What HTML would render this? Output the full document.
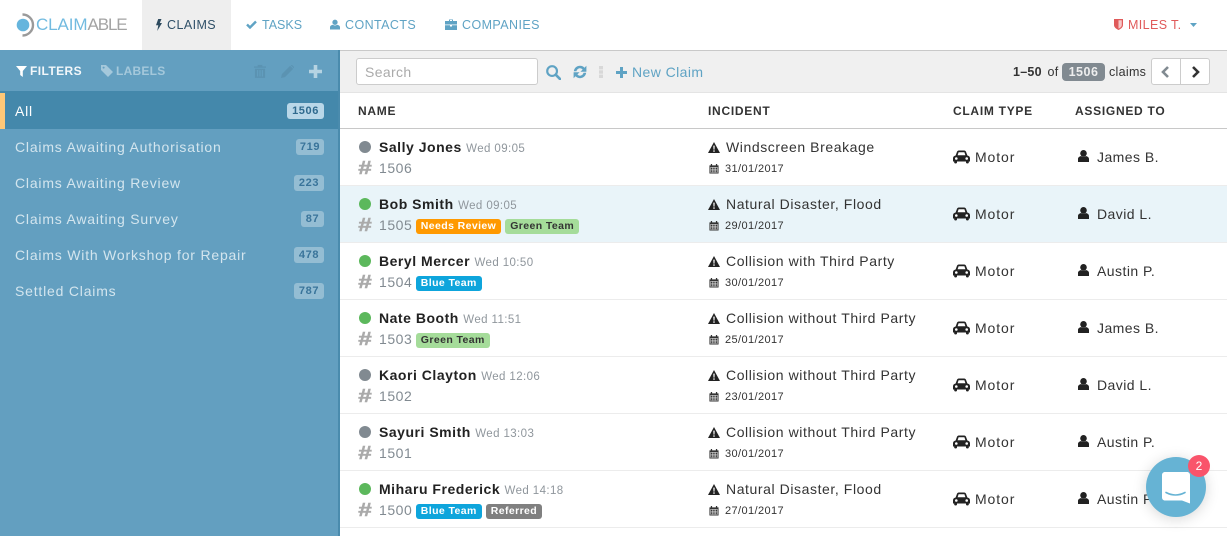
<!DOCTYPE html>
<html><head><meta charset="utf-8"><title>Claimable</title>
<style>
*{box-sizing:border-box}
html,body{margin:0;padding:0;width:1227px;height:536px;overflow:hidden;background:#fff;font-family:"Liberation Sans",sans-serif;color:#222}
.a{position:absolute;white-space:nowrap}
svg{position:absolute;display:block}
.nav{top:17px;font-size:12.5px;line-height:16px;letter-spacing:.42px;color:#5fa3c4}
.flt{left:15px;font-size:14px;line-height:18px;letter-spacing:.8px;color:#d3e5ee}
.cnt{height:16px;border-radius:3px;background:#94bdd3;color:#39749a;font-size:11px;font-weight:bold;line-height:16px;text-align:center;letter-spacing:.6px}
.th{top:103px;font-size:12px;font-weight:bold;line-height:16px;letter-spacing:.72px;color:#333}
.row{position:absolute;left:340px;width:887px;height:57px;border-bottom:1px solid #ececec}
.dot{position:absolute;left:19px;top:12px;width:12px;height:12px;border-radius:50%}
.g{background:#5cb85c}.k{background:#818a91}
.nm{position:absolute;left:39px;top:9px;font-size:14px;font-weight:bold;line-height:18px;letter-spacing:.52px;color:#222;white-space:nowrap}
.nm span{font-size:11.5px;font-weight:normal;letter-spacing:.4px;color:#8f969c}
.hs{position:absolute;left:18px;top:30px;width:14px;text-align:center;font-size:18px;font-weight:bold;line-height:18px;color:#aaa;transform:scaleX(1.35);-webkit-text-stroke:.5px #aaa}
.id{position:absolute;left:39px;top:30px;font-size:14px;line-height:18px;letter-spacing:.55px;color:#818a91;white-space:nowrap}
.tag{display:inline-block;height:15px;line-height:15px;border-radius:3px;padding:0 5px;font-size:10.5px;font-weight:bold;letter-spacing:.4px;color:#fff;margin-right:4px;vertical-align:1px}
.id .tag:first-of-type{margin-left:-1px}
.o{background:#f90}.lg{background:#a5dc9a;color:#333}.b{background:#0ea5dc}.y{background:gray}
.inc{position:absolute;left:386px;top:9px;font-size:14px;line-height:18px;letter-spacing:.58px;color:#333;white-space:nowrap}
.dt{position:absolute;left:385px;top:33px;font-size:11px;line-height:15px;letter-spacing:.4px;color:#333;white-space:nowrap}
.mt{position:absolute;left:635px;top:19px;font-size:14px;line-height:18px;letter-spacing:.9px;color:#333}
.as{position:absolute;left:757px;top:19px;font-size:14px;line-height:18px;letter-spacing:.45px;color:#333;white-space:nowrap}
</style></head>
<body>
<svg width="0" height="0" style="position:absolute"><defs>
<symbol id="tri" viewBox="0 0 12 11"><path d="M6 0 12 11H0Z" fill="#222"/><path d="M5.300 3.600h1.400L6.500 7.600h-1ZM5.300 8.400h1.400v1.300H5.300Z" fill="#fff"/></symbol>
<symbol id="cal" viewBox="0 0 11 11"><path d="M2 .5h1.400V2H7.600V.5H9V2h1.500v9H.5V2H2Z" fill="#333"/><path d="M1.500 4h8v6h-8Z" fill="#fff"/><path d="M2 4.500h1.500V6H2ZM4 4.500h1.300V6H4ZM5.800 4.500h1.300V6H5.800ZM7.600 4.500H9V6H7.600ZM2 6.500h1.500V8H2ZM4 6.500h1.300V8H4ZM5.800 6.500h1.300V8H5.800ZM7.600 6.500H9V8H7.600ZM2 8.400h1.500v1.200H2ZM4 8.400h1.300v1.200H4ZM5.800 8.400h1.300v1.200H5.800ZM7.600 8.400H9v1.200H7.600Z" fill="#333"/></symbol>
<symbol id="car" viewBox="0 0 17 13"><path d="M4 1.200C4.300.5 5 0 5.800 0h5.400c.8 0 1.500.5 1.800 1.200L14.400 5c1.500.3 2.600 1.200 2.600 2.800V11h-1.200v1c0 1.300-2.800 1.300-2.800 0v-1H4v1c0 1.300-2.800 1.300-2.800 0v-1H0V7.800C0 6.200 1.100 5.300 2.600 5Z" fill="#222"/><path d="M5.600 1.700h5.800l1 3H4.600Z" fill="#fff"/><circle cx="3.300" cy="8" r="1.300" fill="#fff"/><circle cx="13.700" cy="8" r="1.300" fill="#fff"/></symbol>
<symbol id="usr" viewBox="0 0 11 12"><ellipse cx="5.500" cy="3.400" rx="3.300" ry="3.400" fill="#222"/><path d="M0 12V9C0 7.400 1.300 6.500 3 6c1.500 1 3.500 1 5 0 1.700.5 3 1.400 3 3v3Z" fill="#222"/></symbol>
</defs></svg>

<!-- top bar -->
<svg style="left:13px;top:13px" width="22" height="24" viewBox="0 0 22 24"><circle cx="10" cy="12" r="6.300" fill="#66b5dd"/><path d="M9.500 1.500a10.500 10.500 0 0 1 0 21" fill="none" stroke="#9a9a9a" stroke-width="2.400"/></svg>
<div class="a" style="left:36px;top:14px;font-size:17px;line-height:22px;letter-spacing:-.1px;color:#72bbe0">CLAIM<span style="color:#a3a3a3;letter-spacing:-1.1px">ABLE</span></div>

<div class="a" style="left:142px;top:0;width:89px;height:50px;background:#eee"></div>
<svg style="left:156px;top:19px" width="6" height="12" viewBox="0 0 6 12"><path d="M2.200 0H5.500L3.800 4H6L1.200 12 2.300 6.200H0Z" fill="#2d4a5e"/></svg>
<div class="a nav" style="left:167px;color:#2f5068">CLAIMS</div>
<svg style="left:246px;top:20px" width="11" height="9" viewBox="0 0 11 9"><path d="M1 4.500 4 7.500 10 1.500" fill="none" stroke="#5fa3c4" stroke-width="2.400"/></svg>
<div class="a nav" style="left:262px;letter-spacing:0">TASKS</div>
<svg style="left:330px;top:19px" width="10" height="11" viewBox="0 0 11 11"><circle cx="5.500" cy="3" r="2.900" fill="#5fa3c4"/><path d="M0 11V8.500C0 7 1.300 6.200 3 5.800c1.500 1 3.500 1 5 0 1.700.4 3 1.200 3 2.700V11Z" fill="#5fa3c4"/></svg>
<div class="a nav" style="left:345px">CONTACTS</div>
<svg style="left:445px;top:19px" width="12" height="11" viewBox="0 0 12 11"><path d="M4 2V.5h4V2h4v3.500H0V2ZM5 1v1h2V1ZM0 6.200h5V7.500h2V6.200h5V11H0Z" fill="#5fa3c4"/></svg>
<div class="a nav" style="left:462px">COMPANIES</div>
<svg style="left:1114px;top:19px" width="9" height="11" viewBox="0 0 9 11"><path d="M0 0H9V6C9 8.500 6.500 10 4.500 11 2.500 10 0 8.500 0 6Z" fill="#e05a5a"/><path d="M4.500 1.200H7.800V6C7.800 7.700 6 9 4.500 9.700Z" fill="#f6c9c9"/></svg>
<div class="a nav" style="left:1128px;color:#e05a5a;letter-spacing:.38px">MILES T.</div>
<svg style="left:1190px;top:23px" width="7" height="4" viewBox="0 0 7 4"><path d="M0 0H7L3.500 4Z" fill="#5fa3c4"/></svg>

<!-- sidebar -->
<div class="a" style="left:0;top:50px;width:340px;height:486px;background:#639fc0;border-right:2px solid #4a8bad"></div>
<svg style="left:16px;top:66px" width="11" height="11" viewBox="0 0 11 11"><path d="M0 0H11L6.800 5V11L4.200 9V5Z" fill="#fff"/></svg>
<div class="a" style="left:30px;top:63px;font-size:12px;font-weight:bold;line-height:17px;letter-spacing:.42px;color:#f2f7fa">FILTERS</div>
<svg style="left:101px;top:65px" width="12" height="12" viewBox="0 0 12 12"><path d="M0 0H5L12 7 7 12 0 5Z" fill="#a4c8db"/><circle cx="2.600" cy="2.600" r="1" fill="#639fc0"/></svg>
<div class="a" style="left:116px;top:63px;font-size:12px;font-weight:bold;line-height:17px;letter-spacing:.25px;color:#a4c8db">LABELS</div>
<svg style="left:254px;top:64px" width="12" height="14" viewBox="0 0 13 15"><path d="M0 2.500H4V.8H9V2.500H13V4H0ZM1 5H12V15H1ZM3.300 6.500V13.500H4.500V6.500ZM5.900 6.500V13.500H7.100V6.500ZM8.500 6.500V13.500H9.700V6.500Z" fill="#5b93b2" fill-rule="evenodd"/></svg>
<svg style="left:281px;top:65px" width="13" height="13" viewBox="0 0 15 15"><path d="M0 15 1 10.500 10.500 1 14 4.500 4.500 14Z M11.300.4C12-.2 12.700-.1 13.300.5L14.500 1.700C15.100 2.300 15.200 3 14.700 3.700Z" fill="#5b93b2"/></svg>
<svg style="left:309px;top:65px" width="13" height="13" viewBox="0 0 13 13"><path d="M4.700 0H8.300V4.700H13V8.300H8.300V13H4.700V8.300H0V4.700H4.700Z" fill="#b5d3e2"/></svg>

<div class="a" style="left:0;top:91px;width:338px;height:38px;background:#4488ab"></div>
<div class="a" style="left:0;top:93px;width:5px;height:36px;background:#fec878"></div>
<div class="a flt" style="top:102px;color:#fff">All</div>
<div class="a cnt" style="top:103px;left:287px;width:37px;background:#b9d7e8;color:#2f6a8e">1506</div>
<div class="a flt" style="top:138px">Claims Awaiting Authorisation</div>
<div class="a cnt" style="top:139px;left:296px;width:28px">719</div>
<div class="a flt" style="top:174px">Claims Awaiting Review</div>
<div class="a cnt" style="top:175px;left:294px;width:30px">223</div>
<div class="a flt" style="top:210px">Claims Awaiting Survey</div>
<div class="a cnt" style="top:211px;left:301px;width:23px">87</div>
<div class="a flt" style="top:246px">Claims With Workshop for Repair</div>
<div class="a cnt" style="top:247px;left:294px;width:30px">478</div>
<div class="a flt" style="top:282px">Settled Claims</div>
<div class="a cnt" style="top:283px;left:294px;width:30px">787</div>

<!-- toolbar -->
<div class="a" style="left:340px;top:50px;width:887px;height:43px;background:#f0f0f0;border-top:1px solid #c9c9c9;border-bottom:1px solid #e4e4e4"></div>
<div class="a" style="left:356px;top:58px;width:182px;height:27px;background:#fff;border:1px solid #ccc;border-radius:3px"></div>
<div class="a" style="left:365px;top:63px;font-size:14px;line-height:18px;letter-spacing:.35px;color:#aaa">Search</div>
<svg style="left:546px;top:65px" width="15" height="15" viewBox="0 0 16 16"><circle cx="6.500" cy="6.500" r="5.200" fill="none" stroke="#5fa3c4" stroke-width="2.300"/><path d="M10.500 10.500 15 15" stroke="#5fa3c4" stroke-width="2.800" stroke-linecap="round"/></svg>
<svg style="left:573px;top:65px" width="14" height="14" viewBox="0 0 14 14"><path d="M.8 6.200C1.300 3 3.800.8 7 .8 8.800.8 10.400 1.500 11.500 2.700L13.400.8V6.800H7.400L9.600 4.600C8.900 3.800 8 3.300 7 3.300 5.200 3.300 3.900 4.500 3.500 6.200ZM13.200 7.800C12.700 11 10.200 13.200 7 13.200 5.200 13.200 3.600 12.500 2.500 11.300L.6 13.200V7.200H6.600L4.400 9.400C5.100 10.200 6 10.700 7 10.700 8.800 10.700 10.100 9.500 10.500 7.800Z" fill="#5fa3c4"/></svg>
<div class="a" style="left:599px;top:66px;width:4px;height:12px;background:repeating-linear-gradient(#d8d8d8 0 3px,#e6e6e6 3px 4.500px)"></div>
<svg style="left:616px;top:67px" width="11" height="11" viewBox="0 0 11 11"><path d="M4 0H7V4H11V7H7V11H4V7H0V4H4Z" fill="#5fa3c4"/></svg>
<div class="a" style="left:632px;top:63px;font-size:14px;line-height:18px;letter-spacing:.42px;color:#5fa3c4">New Claim</div>

<div class="a" style="left:1013px;top:64px;font-size:12.500px;line-height:16px;letter-spacing:.25px;word-spacing:2px;color:#333"><b>1–50</b> of</div>
<div class="a" style="left:1062px;top:63px;width:43px;height:18px;border-radius:4px;background:#818a91;color:#eee;font-size:12.500px;font-weight:bold;line-height:18px;text-align:center;letter-spacing:.5px">1506</div>
<div class="a" style="left:1109px;top:64px;font-size:12.500px;line-height:16px;letter-spacing:.3px;color:#333">claims</div>
<div class="a" style="left:1151px;top:58px;width:59px;height:27px;background:#fff;border:1px solid #ccc;border-radius:3px"></div>
<div class="a" style="left:1180px;top:58px;width:1px;height:27px;background:#ccc"></div>
<svg style="left:1161px;top:66px" width="9" height="12" viewBox="0 0 9 12"><path d="M7 1 2 6 7 11" fill="none" stroke="#818a91" stroke-width="2.600"/></svg>
<svg style="left:1191px;top:66px" width="9" height="12" viewBox="0 0 9 12"><path d="M2 1 7 6 2 11" fill="none" stroke="#333" stroke-width="2.600"/></svg>

<!-- table header -->
<div class="a" style="left:340px;top:93px;width:887px;height:36px;background:#fff;border-bottom:1px solid #c8c8c8"></div>
<div class="a th" style="left:358px">NAME</div>
<div class="a th" style="left:708px">INCIDENT</div>
<div class="a th" style="left:953px">CLAIM TYPE</div>
<div class="a th" style="left:1075px">ASSIGNED TO</div>

<!-- rows -->
<div class="row" style="top:129px"><i class="dot k"></i><div class="nm">Sally Jones <span>Wed 09:05</span></div><div class="hs">#</div><div class="id">1506</div>
<svg style="left:368px;top:13px" width="12" height="11"><use href="#tri"/></svg><div class="inc">Windscreen Breakage</div><svg style="left:369px;top:34px" width="10" height="11"><use href="#cal"/></svg><div class="dt">31/01/2017</div><svg style="left:613px;top:21px" width="17" height="14"><use href="#car"/></svg><div class="mt">Motor</div><svg style="left:738px;top:21px" width="11" height="12"><use href="#usr"/></svg><div class="as">James B.</div></div>

<div class="row" style="top:186px;background:#e9f4f9"><i class="dot g"></i><div class="nm">Bob Smith <span>Wed 09:05</span></div><div class="hs">#</div><div class="id">1505 <b class="tag o">Needs Review</b><b class="tag lg">Green Team</b></div>
<svg style="left:368px;top:13px" width="12" height="11"><use href="#tri"/></svg><div class="inc">Natural Disaster, Flood</div><svg style="left:369px;top:34px" width="10" height="11"><use href="#cal"/></svg><div class="dt">29/01/2017</div><svg style="left:613px;top:21px" width="17" height="14"><use href="#car"/></svg><div class="mt">Motor</div><svg style="left:738px;top:21px" width="11" height="12"><use href="#usr"/></svg><div class="as">David L.</div></div>

<div class="row" style="top:243px"><i class="dot g"></i><div class="nm">Beryl Mercer <span>Wed 10:50</span></div><div class="hs">#</div><div class="id">1504 <b class="tag b">Blue Team</b></div>
<svg style="left:368px;top:13px" width="12" height="11"><use href="#tri"/></svg><div class="inc">Collision with Third Party</div><svg style="left:369px;top:34px" width="10" height="11"><use href="#cal"/></svg><div class="dt">30/01/2017</div><svg style="left:613px;top:21px" width="17" height="14"><use href="#car"/></svg><div class="mt">Motor</div><svg style="left:738px;top:21px" width="11" height="12"><use href="#usr"/></svg><div class="as">Austin P.</div></div>

<div class="row" style="top:300px"><i class="dot g"></i><div class="nm">Nate Booth <span>Wed 11:51</span></div><div class="hs">#</div><div class="id">1503 <b class="tag lg">Green Team</b></div>
<svg style="left:368px;top:13px" width="12" height="11"><use href="#tri"/></svg><div class="inc">Collision without Third Party</div><svg style="left:369px;top:34px" width="10" height="11"><use href="#cal"/></svg><div class="dt">25/01/2017</div><svg style="left:613px;top:21px" width="17" height="14"><use href="#car"/></svg><div class="mt">Motor</div><svg style="left:738px;top:21px" width="11" height="12"><use href="#usr"/></svg><div class="as">James B.</div></div>

<div class="row" style="top:357px"><i class="dot k"></i><div class="nm">Kaori Clayton <span>Wed 12:06</span></div><div class="hs">#</div><div class="id">1502</div>
<svg style="left:368px;top:13px" width="12" height="11"><use href="#tri"/></svg><div class="inc">Collision without Third Party</div><svg style="left:369px;top:34px" width="10" height="11"><use href="#cal"/></svg><div class="dt">23/01/2017</div><svg style="left:613px;top:21px" width="17" height="14"><use href="#car"/></svg><div class="mt">Motor</div><svg style="left:738px;top:21px" width="11" height="12"><use href="#usr"/></svg><div class="as">David L.</div></div>

<div class="row" style="top:414px"><i class="dot k"></i><div class="nm">Sayuri Smith <span>Wed 13:03</span></div><div class="hs">#</div><div class="id">1501</div>
<svg style="left:368px;top:13px" width="12" height="11"><use href="#tri"/></svg><div class="inc">Collision without Third Party</div><svg style="left:369px;top:34px" width="10" height="11"><use href="#cal"/></svg><div class="dt">30/01/2017</div><svg style="left:613px;top:21px" width="17" height="14"><use href="#car"/></svg><div class="mt">Motor</div><svg style="left:738px;top:21px" width="11" height="12"><use href="#usr"/></svg><div class="as">Austin P.</div></div>

<div class="row" style="top:471px"><i class="dot g"></i><div class="nm">Miharu Frederick <span>Wed 14:18</span></div><div class="hs">#</div><div class="id">1500 <b class="tag b">Blue Team</b><b class="tag y">Referred</b></div>
<svg style="left:368px;top:13px" width="12" height="11"><use href="#tri"/></svg><div class="inc">Natural Disaster, Flood</div><svg style="left:369px;top:34px" width="10" height="11"><use href="#cal"/></svg><div class="dt">27/01/2017</div><svg style="left:613px;top:21px" width="17" height="14"><use href="#car"/></svg><div class="mt">Motor</div><svg style="left:738px;top:21px" width="11" height="12"><use href="#usr"/></svg><div class="as">Austin P.</div></div>

<!-- chat launcher -->
<div class="a" style="left:1146px;top:457px;width:60px;height:60px;border-radius:50%;background:#66b3d4;box-shadow:0 2px 14px rgba(0,0,0,.16)"></div>
<svg style="left:1162px;top:472px" width="28" height="32" viewBox="0 0 28 32"><path d="M3 0H25C26.700 0 28 1.300 28 3V31.500L20 28.500H3C1.300 28.500 0 27.200 0 25.500V3C0 1.300 1.300 0 3 0Z" fill="#fff"/><path d="M4 20.500Q13.500 25.500 23 20.500" fill="none" stroke="#66b3d4" stroke-width="1.600" stroke-linecap="round"/></svg>
<div class="a" style="left:1188px;top:455px;width:22px;height:22px;border-radius:50%;background:#f9546b;color:#fff;font-size:12px;line-height:22px;text-align:center">2</div>
</body></html>
